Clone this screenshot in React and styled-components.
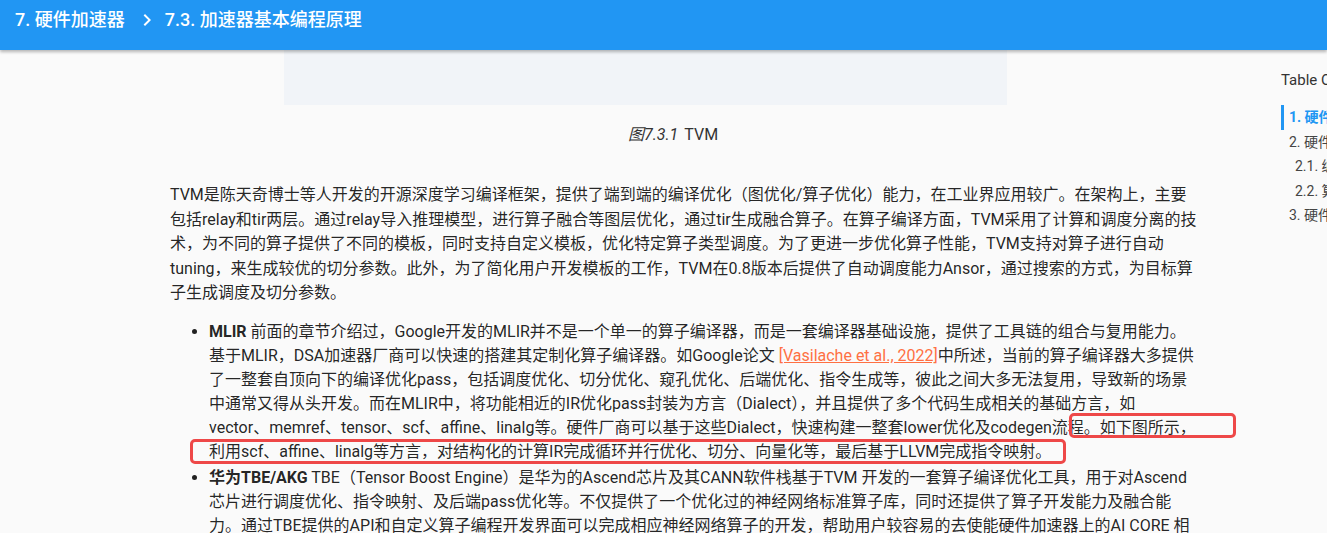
import React from 'react'
import styled, { createGlobalStyle } from "styled-components";

const GlobalStyle = createGlobalStyle`
    html, body {
    margin: 0;
    padding: 0;
    background: #fafafa;
    overflow: hidden;
    }
    body {
    font-family: Roboto, "Noto Sans CJK SC", sans-serif;
    color: rgba(0, 0, 0, 0.87);
    }
`

const Header = styled.header`
    position: relative;
    z-index: 2;
    height: 50px;
    box-sizing: border-box;
    padding: 0 0 10px 15px;
    display: flex;
    align-items: center;
    background: #2196f3;
    box-shadow: 0 2px 3px rgba(0, 0, 0, 0.28);
    color: #ffffff;
    font-size: 18px;
    font-weight: 500;
    white-space: nowrap;
`

const Crumb = styled.span`
    line-height: 40px;
`

const Chevron = styled.svg`
    width: 24px;
    height: 24px;
    margin: 0 6px 0 10px;
    fill: #ffffff;
`

const Layout = styled.div`
    display: grid;
    grid-template-columns: 1281px 300px;
    height: 483px;
    overflow: hidden;
`

const Main = styled.main`
    padding-left: 170px;
    width: 1030px;
    font-size: 16px;
`

const FigureBox = styled.div`
    margin-left: 114px;
    width: 723px;
    height: 55px;
    background: #f1f4f8;
`

const Caption = styled.p`
    margin: 18px 0 0;
    padding-right: 24px;
    text-align: center;
    line-height: 24px;
    color: #333333;
    > em {
    margin-right: 6px;
    }
`

const Paragraph = styled.p`
    margin: 36px 0 0;
    line-height: 24.5px;
`

const List = styled.ul`
    margin: 14px 0 0;
    padding-left: 39px;
`

const Item = styled.li`
    position: relative;
    line-height: 24px;
    margin-bottom: 2px;
    > b {
    font-weight: 700;
    }
`

const Cite = styled.a`
    color: #ff7043;
    text-decoration: underline;
`

const Mark = styled.div`
    position: absolute;
    top: ${p => p.$top}px;
    left: ${p => p.$left}px;
    width: ${p => p.$width}px;
    height: 25px;
    box-sizing: border-box;
    border: 3px solid #ee4848;
    border-radius: 5px;
    pointer-events: none;
`

const Toc = styled.nav`
    padding-top: 18px;
    white-space: nowrap;
`

const TocTitle = styled.div`
    font-size: 15px;
    line-height: 24px;
    color: #333333;
    margin-bottom: 13px;
`

const TocItem = styled.div`
    font-size: 14px;
    line-height: 24.5px;
    padding-left: ${p => p.$indent}px;
    color: ${p => (p.$active ? "#2196f3" : "#444444")};
    font-weight: ${p => (p.$active ? 700 : 400)};
    border-left: 3px solid ${p => (p.$active ? "#2196f3" : "transparent")};
`

const tocItems = [
    { label: "1. 硬件加速器基本组成原理", indent: 5, active: true },
    { label: "2. 硬件加速器的编程方式", indent: 5 },
    { label: "2.1. 编程接口", indent: 11 },
    { label: "2.2. 算子编译器", indent: 11 },
    { label: "3. 硬件加速器的多样化编程方法", indent: 5 },
];

export default () => {
    return (
        <>
            <GlobalStyle />
            <Header>
                <Crumb>7. 硬件加速器</Crumb>
                <Chevron viewBox="0 0 24 24">
                    <path d="M8.6 16.6 13.2 12 8.6 7.4 10 6l6 6-6 6z" />
                </Chevron>
                <Crumb>7.3. 加速器基本编程原理</Crumb>
            </Header>
            <Layout>
                <Main>
                    <FigureBox />
                    <Caption><em>图7.3.1</em>TVM</Caption>
                    <Paragraph>
                        TVM是陈天奇博士等人开发的开源深度学习编译框架，提供了端到端的编译优化（图优化/算子优化）能力，在工业界应用较广。在架构上，主要包括relay和tir两层。通过relay导入推理模型，进行算子融合等图层优化，通过tir生成融合算子。在算子编译方面，TVM采用了计算和调度分离的技术，为不同的算子提供了不同的模板，同时支持自定义模板，优化特定算子类型调度。为了更进一步优化算子性能，TVM支持对算子进行自动tuning，来生成较优的切分参数。此外，为了简化用户开发模板的工作，TVM在0.8版本后提供了自动调度能力Ansor，通过搜索的方式，为目标算子生成调度及切分参数。
                    </Paragraph>
                    <List>
                        <Item>
                            <b>MLIR</b> 前面的章节介绍过，Google开发的MLIR并不是一个单一的算子编译器，而是一套编译器基础设施，提供了工具链的组合与复用能力。基于MLIR，DSA加速器厂商可以快速的搭建其定制化算子编译器。如Google论文 <Cite href="#">[Vasilache et al., 2022]</Cite>中所述，当前的算子编译器大多提供了一整套自顶向下的编译优化pass，包括调度优化、切分优化、窥孔优化、后端优化、指令生成等，彼此之间大多无法复用，导致新的场景中通常又得从头开发。而在MLIR中，将功能相近的IR优化pass封装为方言（Dialect），并且提供了多个代码生成相关的基础方言，如<br />vector、memref、tensor、scf、affine、linalg等。硬件厂商可以基于这些Dialect，快速构建一整套lower优化及codegen流程。如下图所示，利用scf、affine、linalg等方言，对结构化的计算IR完成循环并行优化、切分、向量化等，最后基于LLVM完成指令映射。
                            <Mark $top={93} $left={860} $width={167} />
                            <Mark $top={119} $left={-19} $width={876} />
                        </Item>
                        <Item>
                            <b>华为TBE/AKG</b> TBE（Tensor Boost Engine）是华为的Ascend芯片及其CANN软件栈基于TVM 开发的一套算子编译优化工具，用于对Ascend芯片进行调度优化、指令映射、及后端pass优化等。不仅提供了一个优化过的神经网络标准算子库，同时还提供了算子开发能力及融合能力。通过TBE提供的API和自定义算子编程开发界面可以完成相应神经网络算子的开发，帮助用户较容易的去使能硬件加速器上的AI CORE 相关指令，以实现高性能的神经网络计算。
                        </Item>
                    </List>
                </Main>
                <Toc>
                    <TocTitle>Table Of Contents</TocTitle>
                    {tocItems.map(item => (
                        <TocItem key={item.label} $indent={item.indent} $active={item.active}>
                            {item.label}
                        </TocItem>
                    ))}
                </Toc>
            </Layout>
        </>
    )
}
